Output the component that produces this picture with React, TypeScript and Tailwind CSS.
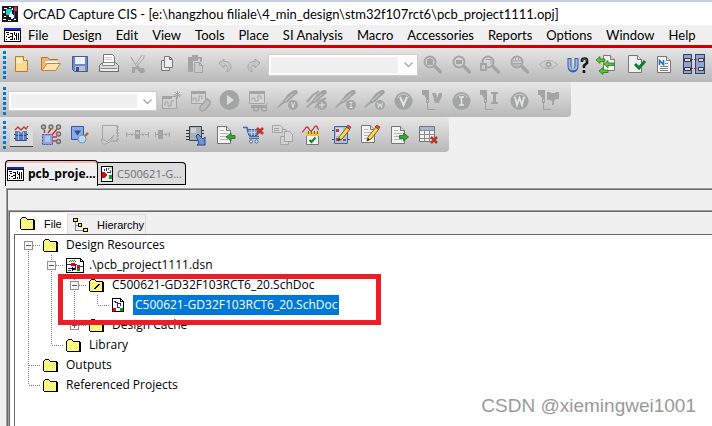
import type { ReactNode } from "react";

type Tool = { label: string; icon: ReactNode; active?: boolean };

const GREY = "#a3a5a4";

/* ---------- shared icon parts ---------- */

function Glyph({ children }: { children: ReactNode }) {
  return (
    <svg width="29" height="28" viewBox="0 0 29 28" fill="none" aria-hidden="true">
      {children}
    </svg>
  );
}

function Lens({ children }: { children?: ReactNode }) {
  return (
    <Glyph>
      <circle cx="12" cy="11" r="5.5" stroke={GREY} strokeWidth="2" />
      <path d="M16 15l2-1 6 6v2l-2 1-6-6z" fill={GREY} />
      {children}
    </Glyph>
  );
}

function Disc({ children }: { children: ReactNode }) {
  return (
    <Glyph>
      <circle cx="14.5" cy="14" r="9" fill={GREY} />
      <path d="M8.500 11c2-5 10-5 12 0" stroke="#cfcfcf" />
      {children}
    </Glyph>
  );
}

function Marker({ double, children }: { double?: boolean; children: ReactNode }) {
  return (
    <Glyph>
      <path d="M4 20l6-6 5-7 6-4h3l1 3-5 4-5 5-5 2-5 4z" fill={GREY} />
      {double && <path d="M5 15l6-7 6-4M13 21l5-7 6-3" stroke={GREY} strokeWidth="2" />}
      <path d="M12 14l8-7" stroke="#cfcfcf" />
      <circle cx="20" cy="18" r="5" fill={GREY} />
      {children}
    </Glyph>
  );
}

function Probe({ children }: { children: ReactNode }) {
  return (
    <Glyph>
      <path d="M4 3h7v13H8v-5L6 8H4z" fill={GREY} />
      <path d="M9.5 15v7.500H17" stroke={GREY} />
      <path d="M9 13h1v1H9z" fill="#e0e0e0" />
      {children}
    </Glyph>
  );
}

function Sheet({ x = 7, y = 5 }: { x?: number; y?: number }) {
  return (
    <g transform={`translate(${x} ${y})`}>
      <path d="M.5.5h9l4 4v13H.5z" fill="#f4f4f4" stroke="#777" />
      <path d="M9.500.5v4h4" fill="#ddd" stroke="#777" />
      <path d="M3 4.500h4M3 7.500h8M3 10.500h8M3 13.500h8" stroke="#b5b5b5" />
    </g>
  );
}

function Pencil() {
  return (
    <g>
      <path d="M13 16L21 6l3 2-8 10-4 2z" fill="#f8d94a" stroke="#8a5a12" />
      <path d="M20 6l2-2 3 2-1.500 2.500z" fill="#d5483c" stroke="#8d2c22" strokeWidth=".6" />
      <path d="M12 20l1-3 2 1.500z" fill="#222" />
    </g>
  );
}

const redCross = <path d="M18 7l6 6M24 7l-6 6" stroke="#b5392d" strokeWidth="2.600" />;

/* ---------- toolbars ---------- */

const editTools: Tool[] = [
  {
    label: "New",
    icon: (
      <Glyph>
        <path d="M8.500 5.500h8l4 4v11h-12z" fill="#fbd98f" stroke="#b57a35" />
        <path d="M9.500 7h6v5h-6z" fill="#fff0cb" />
        <path d="M16.500 5.500v4h4" fill="#fff3d8" stroke="#b57a35" />
      </Glyph>
    ),
  },
  {
    label: "Open",
    icon: (
      <Glyph>
        <path d="M5.500 19V6.500h6l2 2h8V12" fill="#f3b765" stroke="#b5702c" />
        <path d="M9 9.500h13v3H9z" fill="#fff" stroke="#c9a06c" strokeWidth=".6" />
        <path d="M6 19.500l5-7h13.500l-5 7z" fill="#fde3ae" stroke="#c4823c" />
      </Glyph>
    ),
  },
  {
    label: "Save",
    icon: (
      <Glyph>
        <path d="M7.500 5.500h15v15h-13l-2-2z" fill="#7187c4" stroke="#495b96" />
        <path d="M10 6h10v7H10z" fill="#eef1f8" />
        <path d="M10 15h10v5H10z" fill="#b9c0d0" />
        <path d="M11 16h3v4h-3z" fill="#3f4f86" />
      </Glyph>
    ),
  },
  {
    label: "Print",
    icon: (
      <Glyph>
        <path d="M9.500 12V3.500h9l2 2V12" fill="#fff" stroke="#757575" />
        <path d="M11 6.500h7M11 8.500h7" stroke="#ccc" />
        <path d="M5.500 14.500l3-3h13l3 3v6h-19z" fill="#d9dadd" stroke="#6d6d6d" />
        <path d="M8.500 11.500h12v3h-12z" fill="#f5f5f5" stroke="#888" />
        <path d="M7 17.500h16" stroke="#8d8d8d" />
        <path d="M7 19h16" stroke="#fff" />
      </Glyph>
    ),
  },
  {
    label: "Cut",
    icon: (
      <Glyph>
        <path d="M8 6l6 10M21 4v3l-7 8M19 4l-6 9" stroke={GREY} />
        <path d="M7 5l2 4 2 1zM9 16h4l2-2 2 3h4l1 3-1 2h-4l-3-4-2 1v3H9z" fill={GREY} />
      </Glyph>
    ),
  },
  {
    label: "Copy",
    icon: (
      <Glyph>
        <path d="M9.500 9.500h8v10h-8z" fill="#e6e6e6" stroke="#7c7c7c" />
        <path d="M12.500 5.500h5l3 3v8h-8z" fill="#ededed" stroke="#7c7c7c" />
        <path d="M17.500 5.500v3h3" stroke="#7c7c7c" />
      </Glyph>
    ),
  },
  {
    label: "Paste",
    icon: (
      <Glyph>
        <path d="M7 6h4V4h6v2h4v5h-2V8h-2v2h-6V8H9v11h3v2H7z" fill={GREY} />
        <path d="M9 8h8v2h-5v9H9z" fill={GREY} />
        <path d="M13.500 11.500h5l3 3v7h-8z" fill="#cacaca" stroke={GREY} />
        <path d="M18.500 11.500v3h3" stroke={GREY} />
      </Glyph>
    ),
  },
  {
    label: "Undo",
    icon: (
      <Glyph>
        <path d="M9 12l5-4v2.500c5 0 7 2 7 5 0 3-2 5-4 5v-2c2-2 1-4-3-4V17z" fill="#c8c8c8" stroke={GREY} />
      </Glyph>
    ),
  },
  {
    label: "Redo",
    icon: (
      <Glyph>
        <path d="M21 12l-5-4v2.500c-5 0-7 2-7 5 0 3 2 5 4 5v-2c-2-2-1-4 3-4V17z" fill="#c8c8c8" stroke={GREY} />
      </Glyph>
    ),
  },
];

const viewTools: Tool[] = [
  { label: "Zoom in", icon: <Lens><path d="M12 7v7M9 11h6M10 9h4v4h-4z" stroke={GREY} strokeWidth="2" /></Lens> },
  { label: "Zoom out", icon: <Lens><path d="M9 9h6v4H9z" fill={GREY} /></Lens> },
  {
    label: "Zoom area",
    icon: (
      <Lens>
        <path d="M5 19v-6h5v6z" fill="#c8c8c8" stroke={GREY} strokeWidth="2" />
        <path d="M10 8.500h5V13" stroke={GREY} />
      </Lens>
    ),
  },
  { label: "Zoom all", icon: <Lens><path d="M8 10h8M8 12.500h8M10.500 7v3M13.500 7v3M10 12v2h4v-2" stroke={GREY} /></Lens> },
  {
    label: "Show",
    icon: (
      <Glyph>
        <path d="M5.500 13.500l4-3 3-1h4l3 1 4 3-4 3-3 1h-4l-3-1z" stroke="#adadad" />
        <circle cx="14.500" cy="13.500" r="3" fill={GREY} />
        <circle cx="14.500" cy="13.500" r="1" fill="#e2e2e2" />
      </Glyph>
    ),
  },
  {
    label: "Annotate",
    icon: (
      <Glyph>
        <path d="M6.500 7v8c0 6 7 6 7 0V7" stroke="#3c5f9e" strokeWidth="4" />
        <path d="M6.500 8v7c0 4.500 7 4.500 7 0V8" stroke="#9cbce8" strokeWidth="2" />
        <path d="M19 11V9.500c0-2.500 5-2.500 5 0V12l-3 2.500V17M21 19v3" stroke="#151515" strokeWidth="2.600" />
        <path d="M19 9.500c1-2 4-2 5 0" stroke="#8b8b8b" strokeWidth=".8" />
      </Glyph>
    ),
  },
  {
    label: "Back annotate",
    icon: (
      <Glyph>
        <path d="M11.500 4.500h7l4 4v11h-11z" fill="#f4f4f4" stroke="#777" />
        <path d="M18.500 4.500v4h4" fill="#ddd" stroke="#777" />
        <path d="M4 9l4-3.500V8h5v2.500H8v2zM12 13l4-3.500V12h6v2.500h-6V17zM7 20l4-3.500V19h5v2.500h-5v2z" fill="#5bc73c" stroke="#237a16" strokeWidth=".8" />
      </Glyph>
    ),
  },
  {
    label: "Design rules check",
    icon: (
      <Glyph>
        <path d="M7.500 4.500h9l4 4v13h-13z" fill="#efefef" stroke="#777" />
        <path d="M16.500 4.500v4h4" fill="#ddd" stroke="#777" />
        <path d="M14 13l4 4 6-7" stroke="#117a3a" strokeWidth="3" />
      </Glyph>
    ),
  },
  {
    label: "Create netlist",
    icon: (
      <Glyph>
        <path d="M7.500 5.500h9l4 4v12h-13z" fill="#f4f4f4" stroke="#777" />
        <path d="M16.500 5.500v4h4" fill="#ddd" stroke="#777" />
        <path d="M9.500 14V9.500l4 4V9" stroke="#1f72c4" strokeWidth="1.600" />
        <path d="M15 12.500h3M10 15.500h8M10 17.500h8M10 19.500h8" stroke="#888" />
      </Glyph>
    ),
  },
  {
    label: "Cross reference",
    icon: (
      <Glyph>
        <path d="M4 3h9v20H4zM16 3h10v20H16z" fill="#8fa3d6" />
        <path d="M4.500 3v20M12.500 3v20M16.500 3v20M25.500 3v20M4 3.500h9M16 3.500h10M4 22.500h9M16 22.500h10" stroke="#2f4168" />
        <path d="M9 8.500h13M9 17.500h13" stroke="#d0342c" strokeDasharray="1 1" />
        <path d="M5.500 7.500h6v3h-6zM19.500 7.500h5v3h-5zM5.500 16.500h6v3h-6zM19.500 16.500h5v3h-5z" fill="#ddd" stroke="#3a3a3a" />
      </Glyph>
    ),
  },
];

const simTools: Tool[] = [
  {
    label: "New simulation profile",
    icon: (
      <Glyph>
        <path d="M5.500 9.500h14v12h-14z" fill="#d0d0d0" stroke={GREY} />
        <path d="M5 9h10v3H5z" fill={GREY} />
        <path d="M8 19v-4h3v4h3v-5h3" stroke={GREY} />
        <path d="M20.500 4v8M16.500 8h8M18 5l5 5M23 5l-5 5" stroke={GREY} />
      </Glyph>
    ),
  },
  {
    label: "Edit simulation profile",
    icon: (
      <Glyph>
        <path d="M5.500 4.500h14v12h-14z" fill="#d3d3d3" stroke={GREY} />
        <path d="M5 4h15v3H5z" fill={GREY} />
        <path d="M7 14v-3h3v3h3v-5h3v3" stroke={GREY} />
        <path d="M14 20l7-8 3 2v3l-5 6-3 1-2-1z" fill="#bebebe" stroke={GREY} strokeWidth="1.500" />
      </Glyph>
    ),
  },
  {
    label: "Run",
    icon: (
      <Glyph>
        <circle cx="14.500" cy="13" r="10" fill={GREY} />
        <path d="M12 8l7 5-7 5z" fill="#dcdcdc" />
      </Glyph>
    ),
  },
  {
    label: "View results",
    icon: (
      <Glyph>
        <path d="M5.500 4.500h15v12h-15z" fill="#d3d3d3" stroke={GREY} />
        <path d="M5 4h16v3H5z" fill={GREY} />
        <path d="M8 14v-3h3v3h3v-5h3v3M8 19h14l2-3" stroke={GREY} />
        <path d="M7 18h15v3H7z" fill={GREY} />
        <circle cx="12" cy="21.500" r="2.500" stroke={GREY} strokeWidth="1.500" />
        <circle cx="20" cy="21.500" r="2.500" stroke={GREY} strokeWidth="1.500" />
      </Glyph>
    ),
  },
  { label: "Voltage marker", icon: <Marker><path d="M18.500 15.500l1.500 5 1.500-5" stroke="#e3e3e3" /></Marker> },
  { label: "Differential marker", icon: <Marker double><path d="M20 15v6M17 18h6" stroke="#e3e3e3" /></Marker> },
  { label: "Current marker", icon: <Marker><path d="M18.500 15.500h3M20 15.500v5M18.500 20.500h3" stroke="#e3e3e3" /></Marker> },
  { label: "Power marker", icon: <Marker><path d="M17.500 15.500l1 5 1.500-4 1.500 4 1-5" stroke="#e3e3e3" /></Marker> },
  { label: "Bias voltage", icon: <Disc><path d="M11 10l3.500 8 3.500-8" stroke="#e3e3e3" strokeWidth="2" /></Disc> },
  { label: "Toggle voltage", icon: <Probe><path d="M14 6h4l1 5 2-5h3v3l-3 7h-4z" fill={GREY} /></Probe> },
  { label: "Bias current", icon: <Disc><path d="M12 10h5M14.500 10v8M12 18h5" stroke="#e3e3e3" strokeWidth="1.500" /></Disc> },
  { label: "Toggle current", icon: <Probe><path d="M15 5h7v2h-2v8h2v2h-7v-2h2V7h-2z" fill={GREY} /></Probe> },
  { label: "Bias power", icon: <Disc><path d="M10 10l2 8 2.500-7 2.500 7 2-8" stroke="#e3e3e3" strokeWidth="1.800" /></Disc> },
  { label: "Toggle power", icon: <Probe><path d="M13 5h3l1 1h4l1-1h3v7h-3l-2 2v4h-2v-4l-2-1h-3z" fill={GREY} /></Probe> },
];

const partTools: Tool[] = [
  {
    label: "Part manager",
    active: true,
    icon: (
      <Glyph>
        <path d="M8 9l3-3 3 3 3-3 2 2 2-3" stroke="#c0392f" strokeWidth="1.300" />
        <path d="M8 10h4l2 2 2-2h4v10H8z" fill="#5d7fc0" />
        <path d="M7 13.500h2M7 17.500h2M19 13.500h2M19 17.500h2" stroke="#3a4e85" />
        <path d="M9 14.500h10M9 19.500h10" stroke="#34477e" />
        <path d="M11.500 11v8M16.500 11v8" stroke="#a9bfe8" />
      </Glyph>
    ),
  },
  {
    label: "Place part array",
    icon: (
      <Glyph>
        <path d="M6.500 13.500h10v10h-10z" fill="#8ea6de" stroke="#3c56a0" strokeDasharray="2 1" />
        <path d="M9 15h5v6H9z" fill="#b5c5ee" />
        <path d="M8.500 12V9M12 12l3-4M16 14l5-6M17 16h4M17 20h4" stroke="#cf2f2a" strokeWidth="1.500" />
        <g fill="#bcbcbc" stroke="#6d6d6d" strokeWidth="1.300">
          <circle cx="7.500" cy="6" r="2" />
          <circle cx="15" cy="6" r="2" />
          <circle cx="22.500" cy="6" r="2" />
          <circle cx="22.500" cy="13" r="2" />
          <circle cx="22.500" cy="20.500" r="2" />
        </g>
      </Glyph>
    ),
  },
  {
    label: "Search parts",
    icon: (
      <Glyph>
        <path d="M6.500 5.500h12v13h-12z" fill="#8da8e4" stroke="#39539e" />
        <path d="M9 9.500h7l-3.500 5z" fill="#2f4b9c" />
        <path d="M19 16l4-4" stroke="#b06424" strokeWidth="2.400" />
        <circle cx="17" cy="18" r="4" fill="#b8dcf4" stroke="#7896ad" />
      </Glyph>
    ),
  },
  {
    label: "Draw polyline",
    icon: (
      <Glyph>
        <path d="M8.500 18V4.500h15V14" stroke={GREY} />
        <path d="M23.500 5v15h-9" stroke={GREY} strokeDasharray="2 1" strokeWidth="2" />
        <path d="M7 19h3l3 2 7-7-4 7-4 2H9z" fill="#cfcfcf" stroke={GREY} />
      </Glyph>
    ),
  },
  {
    label: "Link component",
    icon: (
      <Glyph>
        <path d="M3.500 11v5M25.500 11v5M4 13.500h3l1-1 1 2 1-2 1 1h7l1-1 1 2 1-2 1 1h3" stroke={GREY} />
        <path d="M12 9h5v9h-5z" fill={GREY} />
        <path d="M13 11h3v2h-3z" fill="#c9c9c9" />
      </Glyph>
    ),
  },
  {
    label: "Unlink component",
    icon: (
      <Glyph>
        <path d="M6 9h5v9H6z" fill={GREY} />
        <path d="M3.500 11v5M17.500 11v5M4 13.500h8l1-1 1 2 1-2 1 1h2" stroke={GREY} />
      </Glyph>
    ),
  },
  {
    label: "Place database part",
    icon: (
      <Glyph>
        <path d="M5 9.500h3M5 12.500h3M5 15.500h3M5 18.500h3M20 9.500h3M20 12.500h3" stroke="#333" />
        <path d="M8.500 5.500h12v14h-12z" fill="#a9b1b8" stroke="#3f4448" />
        <path d="M10 7h5v5h-5z" fill="#c9d0d6" />
        <path d="M15 15l2-2 5 5 2-2v8h-8l2-2z" fill="#6f92dc" stroke="#27458f" />
      </Glyph>
    ),
  },
  {
    label: "Import sheet",
    icon: (
      <Glyph>
        <Sheet />
        <path d="M16 16l5-4v2.500h4v3h-4V20z" fill="#36a834" stroke="#17691a" strokeWidth=".8" />
      </Glyph>
    ),
  },
  {
    label: "Clear cart",
    icon: (
      <Glyph>
        <path d="M4 6.500h4l3 9h9" stroke="#4667a8" strokeWidth="1.500" />
        <path d="M8 8.500h11l-1 6h-8z" fill="#7d9bd3" stroke="#3e5d9e" />
        <path d="M9 11.500h10M12.500 8v7M15.500 8v7" stroke="#cfdcf3" strokeWidth=".7" />
        <path d="M10 17.500h10" stroke="#4667a8" />
        <circle cx="12" cy="20.500" r="1.500" fill="#fff" stroke="#3e5d9e" />
        <circle cx="17.500" cy="20.500" r="1.500" fill="#fff" stroke="#3e5d9e" />
        {redCross}
      </Glyph>
    ),
  },
  {
    label: "Derive part",
    icon: (
      <Glyph>
        <path d="M4.500 4.500h8l2 2v5h-10zM6 7.500h5M6 9.500h5M15 8.500h3v4" stroke={GREY} />
        <path d="M12.500 15.500h8v8h-8z" fill="#d0d0d0" stroke={GREY} />
        <path d="M16.500 10.500h5l3 3v7h-8z" fill="#d6d6d6" stroke={GREY} />
      </Glyph>
    ),
  },
  {
    label: "Check simulation",
    icon: (
      <Glyph>
        <path d="M5 11c2 0 3-5 5-5s2 4 4 4 3-5 5-5 1 4 3 3" stroke="#c23a33" strokeWidth="1.300" />
        <path d="M9.500 12.500h12v11h-12z" fill="#f4f6ee" stroke="#777" />
        <path d="M9 11h13v4H9z" fill="#f1c232" />
        <path d="M11.500 10v3M14.500 10v3M17.500 10v3M20.500 10v3" stroke="#7a5c10" />
        <path d="M12.500 19l2 2 4-4.500" stroke="#127a35" strokeWidth="2" />
      </Glyph>
    ),
  },
  {
    label: "Edit part",
    icon: (
      <Glyph>
        <path d="M8.500 5.500h13v17h-13z" fill="#a9bfec" stroke="#4665a8" />
        <path d="M10 7h7v8h-7z" fill="#d4e0f8" />
        <path d="M6 9.500h3M6 18.500h3M21 18.500h3" stroke="#3f5a97" />
        <path d="M10 8h3v3h-3zM10 17h3v3h-3zM17 18h3v2h-3z" fill="#c53b36" />
        <Pencil />
      </Glyph>
    ),
  },
  { label: "Edit sheet", icon: <Glyph><Sheet x={6} y={4} /><Pencil /></Glyph> },
  {
    label: "Export sheet",
    icon: (
      <Glyph>
        <Sheet />
        <path d="M24.500 16l-5-4v2.500h-4v3h4V20z" fill="#36a834" stroke="#17691a" strokeWidth=".8" />
      </Glyph>
    ),
  },
  {
    label: "Delete table",
    icon: (
      <Glyph>
        <path d="M6.500 5.500h15v15h-15z" fill="#f2f2f2" stroke="#757575" />
        <path d="M7 6h14v3H7z" fill="#a8b4d8" />
        <path d="M7 9.500h14M7 13.500h14M7 17.500h14M11.500 9v11M16.500 9v11" stroke="#8c8c8c" />
        <g transform="translate(0 9)">{redCross}</g>
      </Glyph>
    ),
  },
];

function ToolButtons({ tools }: { tools: Tool[] }) {
  return (
    <>
      {tools.map((tool) => (
        <button
          key={tool.label}
          type="button"
          aria-label={tool.label}
          className="relative w-[29px] shrink-0"
        >
          {tool.active && (
            <span className="absolute inset-x-[3px] top-[2px] h-6 border-b border-[#444] bg-[#dadada]" />
          )}
          <span className="relative block">{tool.icon}</span>
        </button>
      ))}
    </>
  );
}

function Grip() {
  return (
    <div className="ml-[3px] mr-px flex shrink-0 flex-col gap-[2px]">
      {[0, 1, 2, 3, 4, 5].map((n) => (
        <span key={n} className="size-[3px] bg-[#0078d7]" />
      ))}
    </div>
  );
}

function Combo({ label, className }: { label: string; className: string }) {
  return (
    <div className={`relative shrink-0 border border-[#cdcdcd] bg-white p-[2px] ${className}`}>
      <select
        aria-label={label}
        disabled
        className="block h-full w-[calc(100%-17px)] appearance-none bg-[#f0f0f0]"
      />
      <svg className="absolute right-1 top-[7px]" width="9" height="6" fill="none" aria-hidden="true">
        <path d="M.5.5l4 4 4-4" stroke="#a8a8a8" strokeWidth="1.300" />
      </svg>
    </div>
  );
}

/* ---------- small pixel icons ---------- */

function AppIcon() {
  return (
    <svg width="16" height="16" className="shrink-0" shapeRendering="crispEdges" aria-hidden="true">
      <path d="M0 0h16v16H0z" fill="#1a1a1a" />
      <path d="M2 2h3v1H2zM1 5h2v2H1zM2 10h2v1H2zM1 13h3v1H1zM7 1h2v1H7zM12 13h2v1h-2zM10 2h1v2h-1zM6 14h3v1H6z" fill="#fff" />
      <path d="M4 3h6v6H4z" fill="#19d3dc" />
      <path d="M8 6h2v2h1v1h1v1h1v2h-2v1H9v-2H7V8h1z" fill="#fff" />
      <path d="M12 1h3v4h-3z" fill="#e23030" />
      <path d="M12 5h1v8h-1zM15 5v10" fill="#2b46d6" />
    </svg>
  );
}

function ProjectIcon() {
  return (
    <svg width="17" height="14" className="shrink-0" shapeRendering="crispEdges" aria-hidden="true">
      <path d="M0 0h17v14H0z" fill="#000" />
      <path d="M0 0h17v2H0z" fill="#1628c8" />
      <path d="M1 3h15v10H1z" fill="#fff" />
      <path d="M2 4h2v1H2zM3 6h2v1H3zM2 8h1v1H2zM2 11h1v1H2zM4 9h2v1H4zM6 5h3v1H6zM8 6h1v5H8zM6 8h2v1H6zM6 11h3v1H6zM10 4h1v3h-1zM11 7h2v1h-2zM12 5h1v7h-1zM10 10h1v2h-1zM14 5h1v7h-1zM4 4h1v1H4z" />
    </svg>
  );
}

function PageIcon() {
  return (
    <svg width="12" height="14" className="shrink-0" shapeRendering="crispEdges" aria-hidden="true">
      <path d="M.5.5h8l3 3v10H.5z" fill="#fff" stroke="#000" />
      <path d="M8.500.5v3h3" fill="none" stroke="#000" />
      <path d="M1 10h3v3H1z" fill="#f00" />
      <path d="M8 10h3v3H8z" fill="#0a0" />
      <path d="M2 3h2v1H2zM3 4h3v1H3zM5 5h3v1H5zM5 6h1v4H5zM6 9h2v1H6zM8 5h1v3H8z" fill="#22c" />
    </svg>
  );
}

function SchematicTabIcon() {
  return (
    <svg width="12" height="16" className="shrink-0" shapeRendering="crispEdges" aria-hidden="true">
      <path d="M.5.5h11v15H.5z" fill="#fff" stroke="#000" />
      <path d="M1 6h2l3 3-3 3H1z" fill="#e00" />
      <path d="M8 9h3v4H8zM7 2h1v2H7zM9 4h1v3H9z" fill="#0a0" />
      <path d="M5 2h1v3H5zM6 6h3v1H6zM3 3h1v2H3z" fill="#22c" />
      <path d="M8 1h3v2H8z" fill="#fbb" />
    </svg>
  );
}

function Folder({ open }: { open?: boolean }) {
  return (
    <svg width="15" height="13" className="shrink-0" shapeRendering="crispEdges" aria-hidden="true">
      <defs>
        <pattern id="dither" width="2" height="2" patternUnits="userSpaceOnUse">
          <path d="M0 0h2v2H0z" fill="#ff0" />
          <path d="M0 0h1v1H0zM1 1h1v1H1z" fill="#fff" />
        </pattern>
      </defs>
      <path d="M1 2h1V1h4v1h1v1h7v9H1z" fill="url(#dither)" />
      <path d="M0 2h1v10H0zM1 1h1v1H1zM2 0h4v1H2zM6 1h1v1H6zM7 2h7v1H7zM14 3h1v10h-1zM1 12h14v1H1zM13 3h1v9h-1z" />
      {open && <path d="M5 9h1V8h1V7h1V6h1V5h2v1h-1v1H9v1H8v1H7v1H5z" />}
    </svg>
  );
}

function DesignIcon() {
  return (
    <svg width="18" height="15" className="shrink-0" shapeRendering="crispEdges" aria-hidden="true">
      <path d="M.5.5h14l3 3v11H.5z" fill="#fff" stroke="#000" />
      <path d="M14.500.5v3h3" fill="none" stroke="#000" />
      <path d="M3 3h1v1H3zM4 2h1v1H4zM5 3h1v1H5zM6 2h1v1H6zM7 3h1v1H7zM8 2h1v1H8zM9 3h1v1H9zM2 12h3v1H2zM11 10h3v3h-3z" fill="#090" />
      <path d="M5 5h4v3H5zM11 7h3v3h-3z" fill="#e00" />
      <path d="M1 6h4v1H1zM9 6h2v1H9zM9 7h1v5H9zM2 10h4v1H2zM14 8h3v1h-3z" fill="#22c" />
      <path d="M6 9h1v4H6zM7 10h2v2H7z" fill="#000" />
    </svg>
  );
}

function HierarchyIcon() {
  return (
    <svg width="15" height="14" className="shrink-0" shapeRendering="crispEdges" aria-hidden="true">
      <path d="M2.500 4v8H11M3 7.500h4" fill="none" stroke="#888" />
      <path d="M.5.5h4v3h-4zM5.500 5.500h3v3h-3zM10.500 10.500h4v3h-4z" fill="#ff0" stroke="#000" />
    </svg>
  );
}

/* ---------- project tree ---------- */

type Branch = "line" | "tee" | "end" | "root" | "minus" | "plus";

const rows: { text: string; cells: Branch[]; icon: ReactNode; selected?: boolean }[] = [
  { text: "Design Resources", cells: ["root"], icon: <Folder /> },
  { text: ".\\pcb_project1111.dsn", cells: ["line", "minus"], icon: <DesignIcon /> },
  { text: "C500621-GD32F103RCT6_20.SchDoc", cells: ["line", "line", "minus"], icon: <Folder open /> },
  {
    text: "C500621-GD32F103RCT6_20.SchDoc",
    cells: ["line", "line", "line", "end"],
    icon: <PageIcon />,
    selected: true,
  },
  { text: "Design Cache", cells: ["line", "line", "plus"], icon: <Folder /> },
  { text: "Library", cells: ["line", "end"], icon: <Folder /> },
  { text: "Outputs", cells: ["tee"], icon: <Folder /> },
  { text: "Referenced Projects", cells: ["end"], icon: <Folder /> },
];

const lines: Record<Branch, string> = {
  line: "M11.500 0v20",
  tee: "M11.500 0v20M12 10.500h11",
  end: "M11.500 0v10M12 10.500h11",
  root: "M11.500 10v10M12 10.500h11",
  minus: "M11.500 0v20M12 10.500h11",
  plus: "M11.500 0v10M12 10.500h11",
};

function BranchCell({ kind }: { kind: Branch }) {
  const box = kind === "root" || kind === "minus" || kind === "plus";
  return (
    <svg width="23" height="20" className="shrink-0" shapeRendering="crispEdges" aria-hidden="true">
      <path d={lines[kind]} fill="none" stroke="#808080" strokeDasharray="1 1" />
      {box && (
        <>
          <path d="M7.500 6.500h8v8h-8z" fill="#f8f8f8" stroke="#919191" />
          <path d={kind === "plus" ? "M9 10.500h5M11.500 8v5" : "M9 10.500h5"} stroke="#3f5ba9" />
        </>
      )}
    </svg>
  );
}

const menus = [
  "File", "Design", "Edit", "View", "Tools", "Place", "SI Analysis",
  "Macro", "Accessories", "Reports", "Options", "Window", "Help",
];

const barClass =
  "flex items-center border-b border-[#b8b8b8] bg-linear-to-b from-[#e6e6e6] to-[#bababa]";

export default function App() {
  return (
    <div className="relative flex min-h-screen flex-col overflow-hidden bg-[#f0f0f0] font-['Open_Sans','Noto_Sans',sans-serif] text-[12px] leading-5 text-black">
      <header className="flex h-[25px] items-center gap-[5px] border-t-2 border-[#c6d0e2] bg-white pl-[2px] font-['Lato',sans-serif] text-[13px] whitespace-nowrap">
        <AppIcon />
        <h1>{"OrCAD Capture CIS - [e:\\hangzhou filiale\\4_min_design\\stm32f107rct6\\pcb_project1111.opj]"}</h1>
      </header>

      <nav className="flex h-[23px] items-center border-b-3 border-[#cb0000] pl-1 font-['Lato',sans-serif] text-[13px] whitespace-nowrap">
        <ProjectIcon />
        <div className="ml-[7px] flex gap-[14px]">
          {menus.map((menu) => (
            <button key={menu} type="button">
              {menu}
            </button>
          ))}
        </div>
      </nav>

      <div className={`h-[34px] ${barClass}`}>
        <Grip />
        <ToolButtons tools={editTools} />
        <Combo label="Part" className="h-[22px] w-[150px]" />
        <ToolButtons tools={viewTools} />
      </div>
      <div className={`h-[35px] w-fit rounded-r pt-[3px] pr-2 ${barClass}`}>
        <Grip />
        <Combo label="Simulation profile" className="ml-px h-[20px] w-[149px]" />
        <ToolButtons tools={simTools} />
      </div>
      <div className={`h-[35px] w-fit rounded-r pt-px pr-[7px] ${barClass}`}>
        <Grip />
        <ToolButtons tools={partTools} />
      </div>

      <div className="flex items-end pt-2 pl-[5px] whitespace-nowrap">
        <button
          type="button"
          className="flex h-[26px] w-[93px] items-center gap-1 rounded-t-[4px] border border-b-0 border-black pl-px font-bold shadow-[inset_0_2px_0_#ffb6b6]"
        >
          <ProjectIcon />
          pcb_proje...
        </button>
        <button
          type="button"
          className="mb-px flex h-[23px] w-[88px] items-center gap-1 rounded-tr-[4px] border border-l-0 border-black bg-[#dcdcdc] pl-[3px] text-[11px] text-[#6d6d6d]"
        >
          <SchematicTabIcon />
          C500621-G...
        </button>
      </div>

      <main className="mt-[2px] ml-[6px] flex flex-1 flex-col border-t border-l border-[#a0a0a0]">
        <div className="flex flex-1 flex-col border-t border-l border-[#696969] pt-5">
          <div className="flex flex-1 flex-col border-t border-l border-[#a0a0a0]">
            <div className="flex flex-1 flex-col border-t border-l border-[#696969]">
              <div className="flex h-[22px] items-end font-['Liberation_Sans',sans-serif] text-[11px]">
                <button type="button" className="flex h-[21px] w-[57px] items-center gap-[9px] bg-white pl-[10px]">
                  <Folder />
                  File
                </button>
                <button
                  type="button"
                  className="flex h-5 w-[79px] items-center gap-[9px] border border-b-0 border-[#dadada] pl-[5px]"
                >
                  <HierarchyIcon />
                  Hierarchy
                </button>
              </div>
              <div className="flex flex-1 bg-white pl-1">
                <div className="relative flex-1 border-t border-l border-[#696969] pl-[2px]">
                  <ul>
                    {rows.map((row, index) => (
                      <li key={index} className="flex h-5 items-center whitespace-nowrap">
                        {row.cells.map((kind, cell) => (
                          <BranchCell key={cell} kind={kind} />
                        ))}
                        <span className="flex w-6 shrink-0 pl-[3px]">{row.icon}</span>
                        <span className={row.selected ? "bg-[#0078d7] px-[2px] text-white" : "px-[2px]"}>
                          {row.text}
                        </span>
                      </li>
                    ))}
                  </ul>
                  <div className="absolute top-[39px] left-[43px] h-[51px] w-[323px] border-[5px] border-[#ee1c24]" />
                </div>
              </div>
            </div>
          </div>
        </div>
      </main>

      <p className="absolute right-4 bottom-2 font-['Liberation_Sans',sans-serif] text-[19px] leading-6 text-[#999]">
        CSDN @xiemingwei1001
      </p>
    </div>
  );
}
